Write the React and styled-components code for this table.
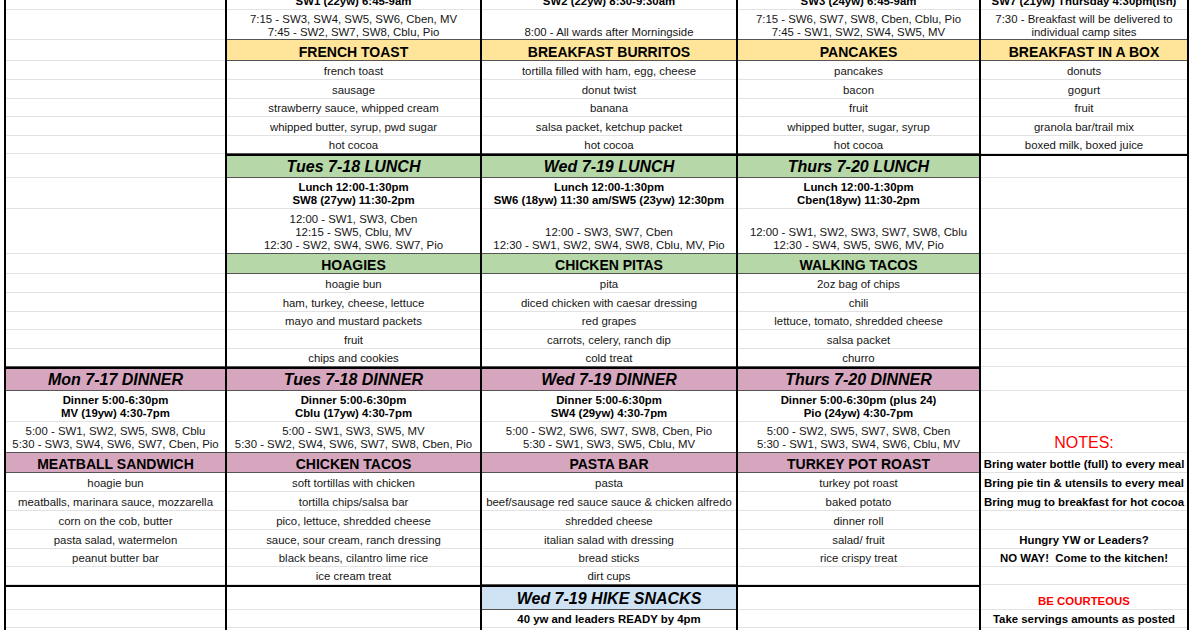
import React from 'react';
import styled, { createGlobalStyle } from 'styled-components';

const Global = createGlobalStyle`
  html, body { margin: 0; padding: 0; background: #fff; }
  body {
    width: 1200px;
    height: 630px;
    overflow: hidden;
    font-family: "Liberation Sans", Arial, sans-serif;
    color: #111;
  }
`;

const ROW_H = [
  10, 30, 21, 19, 19, 18, 19, 18,
  24, 31, 45, 20, 19, 19, 18, 19, 18,
  24, 31, 31, 20, 19, 19, 19, 19, 18, 18,
  25, 18, 18,
];

const YELLOW = '#ffe599';
const GREEN = '#b6d7a8';
const PINK = '#d5a6bd';
const BLUE = '#cfe2f3';

const Sheet = styled.div`
  display: flex;
  padding-left: 4px;
  height: 630px;
  overflow: hidden;
`;

const Column = styled.div`
  box-sizing: border-box;
  flex: none;
  display: flex;
  flex-direction: column;
  width: ${(p) => p.$w}px;
  border-left: 2px solid #000;
  border-right: ${(p) => (p.$last ? '2px solid #000' : 'none')};
`;

const Cell = styled.div`
  box-sizing: border-box;
  flex: none;
  height: ${(p) => p.$h}px;
  display: flex;
  flex-direction: column;
  align-items: center;
  justify-content: ${(p) => (p.$center ? 'center' : 'flex-end')};
  padding: ${(p) => p.$pt || 0}px 2px ${(p) => (p.$center ? 0 : p.$pb)}px;
  overflow: hidden;
  text-align: center;
  background: ${(p) => p.$bg || '#fff'};
  border-top: ${(p) => (p.$thick ? '2px solid #000' : 'none')};
  border-bottom: 1px solid ${(p) => (p.$dark ? '#555' : '#e2e2e2')};
`;

const Line = styled.span`
  display: block;
  white-space: pre;
  font-size: 11.4px;
  line-height: 13px;
  color: #151515;
`;

const BoldLine = styled(Line)`
  font-weight: 700;
  color: #000;
`;

const HeaderText = styled.span`
  display: block;
  white-space: pre;
  font-size: 14px;
  line-height: 16px;
  font-weight: 700;
  color: #000;
`;

const DayText = styled.span`
  display: block;
  white-space: pre;
  font-size: 16px;
  line-height: 18px;
  font-weight: 700;
  font-style: italic;
  color: #000;
`;

const NotesTitle = styled.span`
  display: block;
  font-size: 16px;
  line-height: 18px;
  color: #ff0000;
`;

const RedBold = styled(BoldLine)`
  color: #ff0000;
`;

const b = () => ({ k: 'blank' });
const it = (...l) => ({ k: 'item', l });
const inf = (...l) => ({ k: 'info', l });
const hd = (bg, t) => ({ k: 'header', bg, l: [t] });
const dy = (bg, t) => ({ k: 'day', bg, l: [t] });
const blanks = (n) => Array.from({ length: n }, b);

const columns = [
  {
    w: 221,
    thick: [17, 27],
    cells: [
      ...blanks(17),
      dy(PINK, 'Mon 7-17 DINNER'),
      inf('Dinner 5:00-6:30pm', 'MV (19yw) 4:30-7pm'),
      it('5:00 - SW1, SW2, SW5, SW8, Cblu', '5:30 - SW3, SW4, SW6, SW7, Cben, Pio'),
      hd(PINK, 'MEATBALL SANDWICH'),
      it('hoagie bun'),
      it('meatballs, marinara sauce, mozzarella'),
      it('corn on the cob, butter'),
      it('pasta salad, watermelon'),
      it('peanut butter bar'),
      b(),
      ...blanks(3),
    ],
  },
  {
    w: 255,
    thick: [8, 17, 27],
    cells: [
      inf('SW1 (22yw) 6:45-9am'),
      it('7:15 - SW3, SW4, SW5, SW6, Cben, MV', '7:45 - SW2, SW7, SW8, Cblu, Pio'),
      hd(YELLOW, 'FRENCH TOAST'),
      it('french toast'),
      it('sausage'),
      it('strawberry sauce, whipped cream'),
      it('whipped butter, syrup, pwd sugar'),
      it('hot cocoa'),
      dy(GREEN, 'Tues 7-18 LUNCH'),
      inf('Lunch 12:00-1:30pm', 'SW8 (27yw) 11:30-2pm'),
      it('12:00 - SW1, SW3, Cben', '12:15 - SW5, Cblu, MV', '12:30 - SW2, SW4, SW6. SW7, Pio'),
      hd(GREEN, 'HOAGIES'),
      it('hoagie bun'),
      it('ham, turkey, cheese, lettuce'),
      it('mayo and mustard packets'),
      it('fruit'),
      it('chips and cookies'),
      dy(PINK, 'Tues 7-18 DINNER'),
      inf('Dinner 5:00-6:30pm', 'Cblu (17yw) 4:30-7pm'),
      it('5:00 - SW1, SW3, SW5, MV', '5:30 - SW2, SW4, SW6, SW7, SW8, Cben, Pio'),
      hd(PINK, 'CHICKEN TACOS'),
      it('soft tortillas with chicken'),
      it('tortilla chips/salsa bar'),
      it('pico, lettuce, shredded cheese'),
      it('sauce, sour cream, ranch dressing'),
      it('black beans, cilantro lime rice'),
      it('ice cream treat'),
      ...blanks(3),
    ],
  },
  {
    w: 256,
    thick: [8, 17, 27],
    cells: [
      inf('SW2 (22yw) 8:30-9:30am'),
      it('8:00 - All wards after Morningside'),
      hd(YELLOW, 'BREAKFAST BURRITOS'),
      it('tortilla filled with ham, egg, cheese'),
      it('donut twist'),
      it('banana'),
      it('salsa packet, ketchup packet'),
      it('hot cocoa'),
      dy(GREEN, 'Wed 7-19 LUNCH'),
      inf('Lunch 12:00-1:30pm', 'SW6 (18yw) 11:30 am/SW5 (23yw) 12:30pm'),
      it('12:00 - SW3, SW7, Cben', '12:30 - SW1, SW2, SW4, SW8, Cblu, MV, Pio'),
      hd(GREEN, 'CHICKEN PITAS'),
      it('pita'),
      it('diced chicken with caesar dressing'),
      it('red grapes'),
      it('carrots, celery, ranch dip'),
      it('cold treat'),
      dy(PINK, 'Wed 7-19 DINNER'),
      inf('Dinner 5:00-6:30pm', 'SW4 (29yw) 4:30-7pm'),
      it('5:00 - SW2, SW6, SW7, SW8, Cben, Pio', '5:30 - SW1, SW3, SW5, Cblu, MV'),
      hd(PINK, 'PASTA BAR'),
      it('pasta'),
      it('beef/sausage red sauce sauce & chicken alfredo'),
      it('shredded cheese'),
      it('italian salad with dressing'),
      it('bread sticks'),
      it('dirt cups'),
      dy(BLUE, 'Wed 7-19 HIKE SNACKS'),
      inf('40 yw and leaders READY by 4pm'),
      b(),
    ],
  },
  {
    w: 243,
    thick: [8, 17, 27],
    cells: [
      inf('SW3 (24yw) 6:45-9am'),
      it('7:15 - SW6, SW7, SW8, Cben, Cblu, Pio', '7:45 - SW1, SW2, SW4, SW5, MV'),
      hd(YELLOW, 'PANCAKES'),
      it('pancakes'),
      it('bacon'),
      it('fruit'),
      it('whipped butter, sugar, syrup'),
      it('hot cocoa'),
      dy(GREEN, 'Thurs 7-20 LUNCH'),
      inf('Lunch 12:00-1:30pm', 'Cben(18yw) 11:30-2pm'),
      it('12:00 - SW1, SW2, SW3, SW7, SW8, Cblu', '12:30 - SW4, SW5, SW6, MV, Pio'),
      hd(GREEN, 'WALKING TACOS'),
      it('2oz bag of chips'),
      it('chili'),
      it('lettuce, tomato, shredded cheese'),
      it('salsa packet'),
      it('churro'),
      dy(PINK, 'Thurs 7-20 DINNER'),
      inf('Dinner 5:00-6:30pm (plus 24)', 'Pio (24yw) 4:30-7pm'),
      it('5:00 - SW2, SW5, SW7, SW8, Cben', '5:30 - SW1, SW3, SW4, SW6, Cblu, MV'),
      hd(PINK, 'TURKEY POT ROAST'),
      it('turkey pot roast'),
      it('baked potato'),
      it('dinner roll'),
      it('salad/ fruit'),
      it('rice crispy treat'),
      b(),
      ...blanks(3),
    ],
  },
  {
    w: 210,
    last: true,
    thick: [8],
    cells: [
      inf('SW7 (21yw) Thursday 4:30pm(ish)'),
      it('7:30 - Breakfast will be delivered to', 'individual camp sites'),
      hd(YELLOW, 'BREAKFAST IN A BOX'),
      it('donuts'),
      it('gogurt'),
      it('fruit'),
      it('granola bar/trail mix'),
      it('boxed milk, boxed juice'),
      ...blanks(11),
      { k: 'notes', l: ['NOTES:'] },
      inf('Bring water bottle (full) to every meal'),
      inf('Bring pie tin & utensils to every meal'),
      inf('Bring mug to breakfast for hot cocoa'),
      b(),
      inf('Hungry YW or Leaders?'),
      inf('NO WAY!  Come to the kitchen!'),
      b(),
      { k: 'red', l: ['BE COURTEOUS'] },
      inf('Take servings amounts as posted'),
      b(),
    ],
  },
];

const isHead = (c) => c && (c.k === 'header' || c.k === 'day');

const padTop = (c) => (c.k === 'header' ? 3 : c.k === 'day' ? 1 : 0);
const padBottom = (c, ri) => {
  if (c.k === 'notes') return 0;
  if (ri === 1) return 0;
  return 1;
};

function renderLines(c) {
  if (!c.l) return null;
  switch (c.k) {
    case 'header':
      return c.l.map((t, i) => <HeaderText key={i}>{t}</HeaderText>);
    case 'day':
      return c.l.map((t, i) => <DayText key={i}>{t}</DayText>);
    case 'info':
      return c.l.map((t, i) => <BoldLine key={i}>{t}</BoldLine>);
    case 'notes':
      return c.l.map((t, i) => <NotesTitle key={i}>{t}</NotesTitle>);
    case 'red':
      return c.l.map((t, i) => <RedBold key={i}>{t}</RedBold>);
    default:
      return c.l.map((t, i) => <Line key={i}>{t}</Line>);
  }
}

export default function App() {
  return (
    <>
      <Global />
      <Sheet>
        {columns.map((col, ci) => (
          <Column key={ci} $w={col.w} $last={col.last}>
            {col.cells.map((c, ri) => (
              <Cell
                key={ri}
                $h={ROW_H[ri]}
                $bg={c.bg}
                $center={isHead(c)}
                $pt={padTop(c)}
                $pb={padBottom(c, ri)}
                $thick={col.thick.includes(ri)}
                $dark={isHead(c) || isHead(col.cells[ri + 1])}
              >
                {renderLines(c)}
              </Cell>
            ))}
          </Column>
        ))}
      </Sheet>
    </>
  );
}
